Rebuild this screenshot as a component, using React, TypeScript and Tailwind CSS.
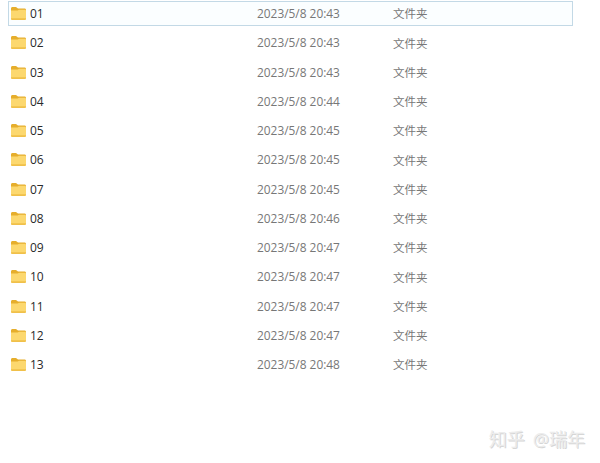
const rows = [
  ['01', '2023/5/8 20:43'],
  ['02', '2023/5/8 20:43'],
  ['03', '2023/5/8 20:43'],
  ['04', '2023/5/8 20:44'],
  ['05', '2023/5/8 20:45'],
  ['06', '2023/5/8 20:45'],
  ['07', '2023/5/8 20:45'],
  ['08', '2023/5/8 20:46'],
  ['09', '2023/5/8 20:47'],
  ['10', '2023/5/8 20:47'],
  ['11', '2023/5/8 20:47'],
  ['12', '2023/5/8 20:47'],
  ['13', '2023/5/8 20:48'],
];

function Folder() {
  return (
    <svg width="15" height="13" viewBox="0 0 15 13" className="shrink-0">
      <path d="M0 1.6C0 .7.6 0 1.5 0H5l2 1.6h6.500c.9 0 1.500.6 1.500 1.400V5H0Z" fill="#e6ae2c" />
      <path d="M0 3.600h6.600L8 2.800h5.600c.9 0 1.400.5 1.400 1.300v7.400c0 .9-.5 1.500-1.400 1.500H1.400C.5 13 0 12.400 0 11.500Z" fill="#fcd86f" />
      <path d="M0 11.300h15v.2c0 .9-.5 1.500-1.400 1.500H1.400C.5 13 0 12.400 0 11.500Z" fill="#f0c04a" />
    </svg>
  );
}

export default function App() {
  return (
    <div className="relative h-[463px] w-[600px] overflow-hidden bg-white pt-px font-['Open_Sans','Noto_Sans_CJK_SC',sans-serif]">
      <div className="flex flex-col pl-2 pr-[27px]">
        {rows.map(([name, date], i) => (
          <div key={name} className="h-[29.25px]">
            <div
              className={`flex h-[25px] items-center border pl-[2px] text-xs ${
                i === 0 ? 'border-[#c3d9e6] bg-[#fbfeff]' : 'border-transparent'
              }`}
            >
              <Folder />
              <span className="ml-1 w-[227px] pt-px text-[#2a2a2a]">{name}</span>
              <span className="w-[136px] pt-px text-[11.9px] text-[#777777]">{date}</span>
              <span className="pt-px text-[11.5px] text-[#777777]">文件夹</span>
            </div>
          </div>
        ))}
      </div>
      <div className="absolute right-[15px] top-[429px] flex gap-[8px] text-[18px] leading-5 text-[#ececec] [text-shadow:1px_1px_0_#d6d6d6]">
        <span>知乎</span>
        <span>@瑞年</span>
      </div>
    </div>
  );
}
